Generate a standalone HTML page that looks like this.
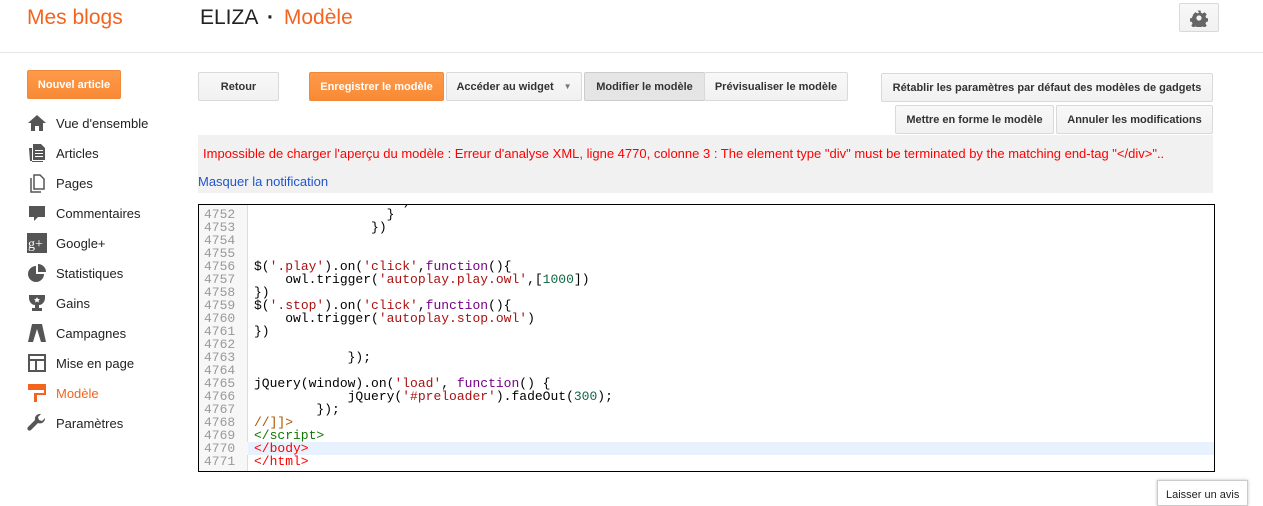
<!DOCTYPE html>
<html><head><meta charset="utf-8"><style>
*{margin:0;padding:0;box-sizing:border-box}
body{width:1263px;height:504px;background:#fff;font-family:"Liberation Sans",Arial,sans-serif;position:relative;overflow:hidden;color:#222}
.a{position:absolute}
.hdr{font-size:21px;top:6px}
.btn{position:absolute;height:29px;border:1px solid #d9d9d9;border-radius:2px;background:linear-gradient(#f8f8f8,#f1f1f1);font-size:11px;font-weight:bold;color:#333;display:flex;align-items:center;justify-content:center;white-space:nowrap}
.or{background:linear-gradient(#fd9a4a,#f98a35);border-color:#f08a3a;color:#fff}
.nav{position:absolute;left:27px;font-size:13px;color:#222;height:20px;display:flex;align-items:center}
.nav svg{width:20px;height:20px;margin-right:9px}
.code{position:absolute;left:198px;top:204px;width:1017px;height:268px;border:1px solid #000;overflow:hidden;background:#fff}
.gut{position:absolute;left:0;top:0;width:49px;height:100%;background:#f7f7f7;border-right:1px solid #ddd}
.lines{position:absolute;left:0;top:-10px;width:100%;font-family:"Liberation Mono",monospace;font-size:13px;line-height:13px}
.l{height:13px;white-space:pre;position:relative}
.n{display:inline-block;width:49px;padding-left:5px;color:#999}
.t{position:absolute;left:55px;top:0;color:#000}
.s{color:#a11}.f{color:#708}.num{color:#164}.g{color:#170}.r{color:#f00}.c{color:#a50}
.hl{background:#e8f2fe}
</style></head><body>
<div class="a hdr" style="left:27px;color:#f3641f">Mes blogs</div>
<div class="a hdr" style="left:200px;color:#222">ELIZA <span style="font-weight:bold;padding:0 4px">·</span> <span style="color:#f3641f">Modèle</span></div>
<div class="btn" style="left:1179px;top:3px;width:40px;height:29px"><svg width="18" height="18" viewBox="0 0 24 24"><path fill="#666" d="M10 2h4l.6 3 2.3 1 2.6-1.7 2.8 2.8-1.7 2.6 1 2.3 3 .6v4l-3 .6-1 2.3 1.7 2.6-2.8 2.8-2.6-1.7-2.3 1-.6 3h-4l-.6-3-2.3-1-2.6 1.7-2.8-2.8 1.7-2.6-1-2.3-3-.6v-4l3-.6 1-2.3L4.5 6.9l2.8-2.8 2.6 1.7 2.3-1zM12 8.5a3.5 3.5 0 100 7 3.5 3.5 0 000-7z"/></svg></div>
<div class="a" style="left:0;top:52px;width:1263px;height:1px;background:#e5e5e5"></div>

<div class="btn or" style="left:27px;top:70px;width:94px;height:29px">Nouvel article</div>
<div class="nav" style="top:113px"><svg viewBox="0 0 20 20"><path fill="#555" d="M10 2L1 10h3v8h4v-5h4v5h4v-8h3z"/></svg>Vue d'ensemble</div>
<div class="nav" style="top:143px"><svg viewBox="0 0 20 20"><path fill="#555" d="M6 1h8l4 4v12H6zM2 5h3v14h11v-1H3z"/><path fill="#fff" d="M8 7h8v1H8zm0 3h8v1H8zm0 3h8v1H8z"/></svg>Articles</div>
<div class="nav" style="top:173px"><svg viewBox="0 0 20 20"><path fill="none" stroke="#555" stroke-width="1.5" d="M7 2h6l4 4v10H7zM4 5v14h10"/></svg>Pages</div>
<div class="nav" style="top:203px"><svg viewBox="0 0 20 20"><path fill="#555" d="M2 3h16v11h-7l-4 4v-4H2z"/></svg>Commentaires</div>
<div class="nav" style="top:233px"><svg viewBox="0 0 20 20"><rect fill="#555" x="0" y="0" width="20" height="20"/><text x="1" y="15" font-size="14" fill="#fff" font-family="Liberation Serif">g+</text></svg>Google+</div>
<div class="nav" style="top:263px"><svg viewBox="0 0 20 20"><path fill="#555" d="M9 3a8 8 0 108 8H9zM11 1v8h8a8 8 0 00-8-8z"/></svg>Statistiques</div>
<div class="nav" style="top:293px"><svg viewBox="0 0 20 20"><path fill="#555" d="M2 2h16v3c0 4-3 7-6 7v3h3v3H5v-3h3v-3c-3 0-6-3-6-7z"/><path fill="#fff" d="M10 4l1 2h2l-1.5 1.5.5 2-2-1-2 1 .5-2L7 6h2z"/></svg>Gains</div>
<div class="nav" style="top:323px"><svg viewBox="0 0 20 20"><path fill="#555" d="M5 1h10l4 18h-5L10 6 6 19H1z"/></svg>Campagnes</div>
<div class="nav" style="top:353px"><svg viewBox="0 0 20 20"><path fill="#555" d="M1 1h18v18H1zm2 2v3h14V3zm0 5v9h5V8zm7 0v9h7V8z"/></svg>Mise en page</div>
<div class="nav" style="top:383px;color:#f3641f"><svg viewBox="0 0 20 20"><path fill="#f3641f" d="M1 1h18v6H1zm16 6h2v5h-9v7H7v-9h10z"/></svg>Modèle</div>
<div class="nav" style="top:413px"><svg viewBox="0 0 20 20"><path fill="#555" d="M18 5l-3 3-3-1-1-3 3-3a5 5 0 00-6 6L1 14a2 2 0 003 3l7-7a5 5 0 007-5z"/></svg>Paramètres</div>

<div class="btn" style="left:198px;top:72px;width:81px">Retour</div>
<div class="btn or" style="left:309px;top:72px;width:135px">Enregistrer le modèle</div>
<div class="btn" style="left:446px;top:72px;width:136px">Accéder au widget <span style="font-size:8px;color:#777;margin-left:10px">▼</span></div>
<div class="btn" style="left:584px;top:72px;width:121px;background:#e5e5e5;border-color:#ccc">Modifier le modèle</div>
<div class="btn" style="left:704px;top:72px;width:144px">Prévisualiser le modèle</div>
<div class="btn" style="left:881px;top:73px;width:332px">Rétablir les paramètres par défaut des modèles de gadgets</div>
<div class="btn" style="left:895px;top:105px;width:159px">Mettre en forme le modèle</div>
<div class="btn" style="left:1056px;top:105px;width:157px">Annuler les modifications</div>

<div class="a" style="left:198px;top:135px;width:1015px;height:58px;background:#f1f1f1"></div>
<div class="a" style="left:203px;top:146px;font-size:13px;color:#f00;white-space:nowrap">Impossible de charger l'aperçu du modèle : Erreur d'analyse XML, ligne 4770, colonne 3 : The element type "div" must be terminated by the matching end-tag "&lt;/div&gt;"..</div>
<div class="a" style="left:198px;top:174px;font-size:13px;color:#2255cc">Masquer la notification</div>

<div class="code"><div class="gut"></div><div class="lines">
<div class="l"><span class="n">4751</span><span class="t">                   )</span></div>
<div class="l"><span class="n">4752</span><span class="t">                 }</span></div>
<div class="l"><span class="n">4753</span><span class="t">               })</span></div>
<div class="l"><span class="n">4754</span></div>
<div class="l"><span class="n">4755</span></div>
<div class="l"><span class="n">4756</span><span class="t">$(<span class="s">'.play'</span>).on(<span class="s">'click'</span>,<span class="f">function</span>(){</span></div>
<div class="l"><span class="n">4757</span><span class="t">    owl.trigger(<span class="s">'autoplay.play.owl'</span>,[<span class="num">1000</span>])</span></div>
<div class="l"><span class="n">4758</span><span class="t">})</span></div>
<div class="l"><span class="n">4759</span><span class="t">$(<span class="s">'.stop'</span>).on(<span class="s">'click'</span>,<span class="f">function</span>(){</span></div>
<div class="l"><span class="n">4760</span><span class="t">    owl.trigger(<span class="s">'autoplay.stop.owl'</span>)</span></div>
<div class="l"><span class="n">4761</span><span class="t">})</span></div>
<div class="l"><span class="n">4762</span></div>
<div class="l"><span class="n">4763</span><span class="t">            });</span></div>
<div class="l"><span class="n">4764</span></div>
<div class="l"><span class="n">4765</span><span class="t">jQuery(window).on(<span class="s">'load'</span>, <span class="f">function</span>() {</span></div>
<div class="l"><span class="n">4766</span><span class="t">            jQuery(<span class="s">'#preloader'</span>).fadeOut(<span class="num">300</span>);</span></div>
<div class="l"><span class="n">4767</span><span class="t">        });</span></div>
<div class="l"><span class="n">4768</span><span class="t c">//]]&gt;</span></div>
<div class="l"><span class="n">4769</span><span class="t g">&lt;/script&gt;</span></div>
<div class="l hl"><span class="n" style="background:#f7f7f7">4770</span><span class="t r">&lt;/body&gt;</span></div>
<div class="l"><span class="n">4771</span><span class="t r">&lt;/html&gt;</span></div>
</div></div>

<div class="a" style="left:1157px;top:480px;width:91px;height:26px;background:#fff;border:1px solid #ccc;box-shadow:0 0 3px rgba(0,0,0,.25);font-size:11px;padding:8px 0 0 8px;color:#222">Laisser un avis</div>
</body></html>
